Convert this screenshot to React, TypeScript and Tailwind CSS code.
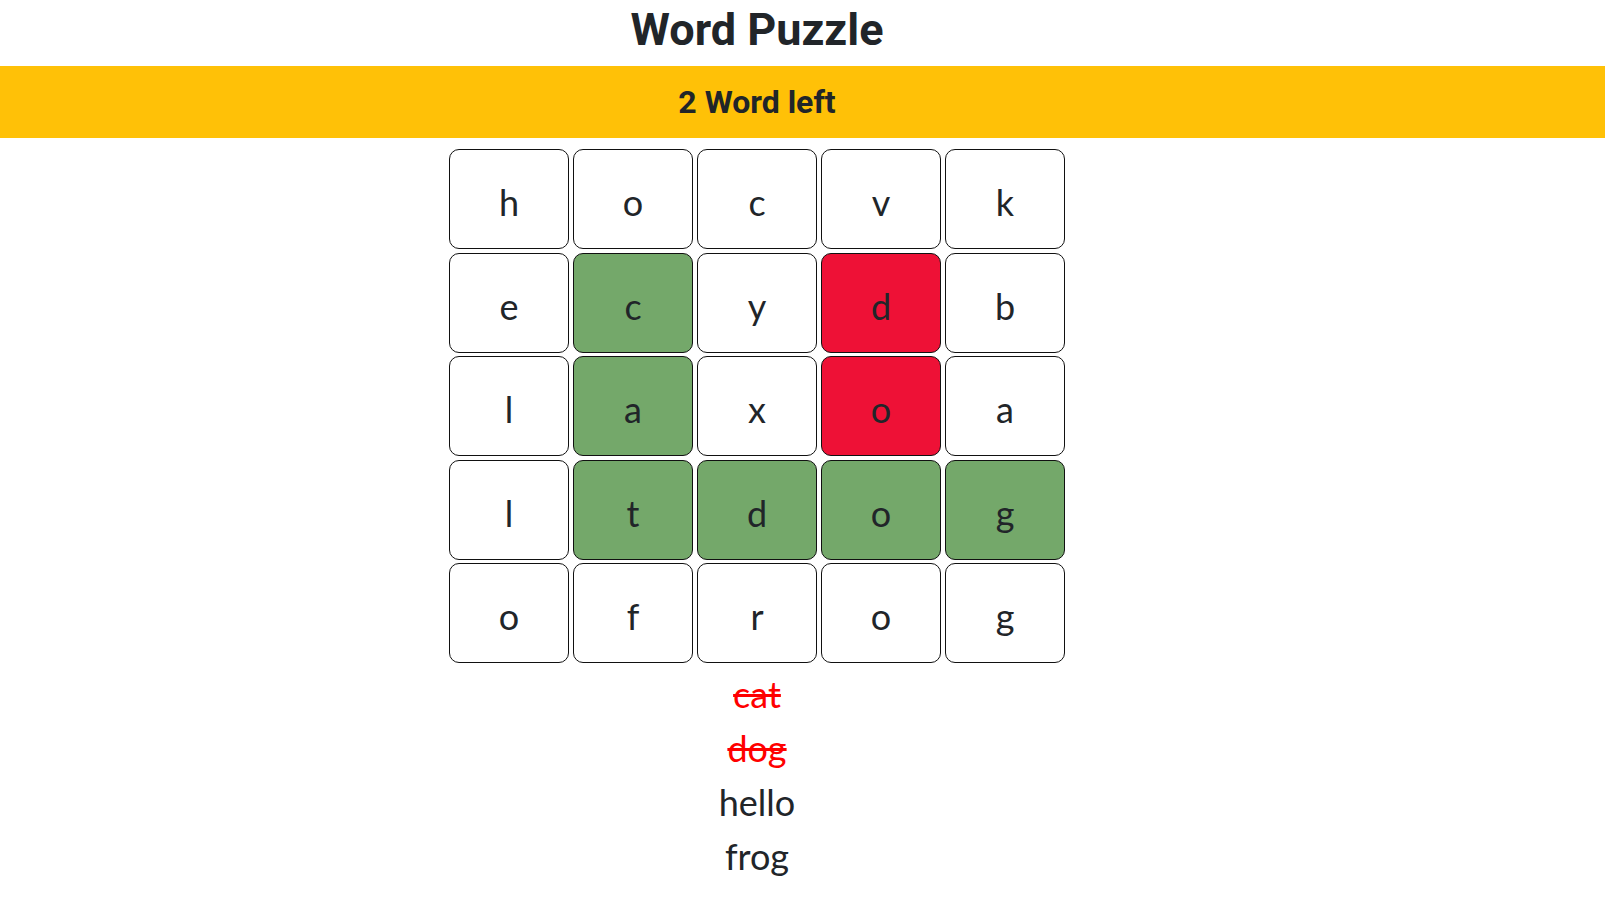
import React from 'react';

type Cell = { ch: string; state?: 'found' | 'wrong' };

const grid: string[][] = [
  ['h', 'o', 'c', 'v', 'k'],
  ['e', 'c', 'y', 'd', 'b'],
  ['l', 'a', 'x', 'o', 'a'],
  ['l', 't', 'd', 'o', 'g'],
  ['o', 'f', 'r', 'o', 'g'],
];

// cells highlighted on the board
const found = ['1-1', '2-1', '3-1', '3-2', '3-3', '3-4'];
const wrong = ['1-3', '2-3'];

const words = [
  { text: 'cat', done: true },
  { text: 'dog', done: true },
  { text: 'hello', done: false },
  { text: 'frog', done: false },
];

function Tile({ ch, state }: Cell) {
  const bg =
    state === 'found' ? 'bg-[#74a86a]' : state === 'wrong' ? 'bg-[#ee1136]' : 'bg-white';
  return (
    <div
      className={`w-[120px] h-[100px] flex items-center justify-center pt-[6px] border border-[#111] rounded-[10px] text-[36px] text-[#212529] ${bg}`}
    >
      {ch}
    </div>
  );
}

export default function App() {
  return (
    <div className="min-h-screen bg-white" style={{ fontFamily: 'Lato, "Noto Sans", sans-serif' }}>
      <h1
        className="h-[66px] pt-[7px] pr-[91px] text-center text-[45px] leading-none font-bold text-[#212529]"
        style={{ fontFamily: 'Roboto, "Liberation Sans", sans-serif' }}
      >
        Word Puzzle
      </h1>

      <div
        className="h-[72px] pt-[20px] pr-[91px] bg-[#ffc107] text-center text-[32px] leading-none font-bold text-[#212529]"
        style={{ fontFamily: 'Roboto, "Liberation Sans", sans-serif' }}
      >
        2 Word left
      </div>

      <div className="flex flex-col items-center pt-[11px] pr-[91px]">
        <div className="grid grid-cols-5 gap-x-1 gap-y-[3.5px]">
          {grid.map((row, r) =>
            row.map((ch, c) => {
              const key = `${r}-${c}`;
              const state = found.includes(key) ? 'found' : wrong.includes(key) ? 'wrong' : undefined;
              return <Tile key={key} ch={ch} state={state} />;
            })
          )}
        </div>

        <ul className="mt-[4px] text-center text-[36px] leading-[54px]">
          {words.map((w) => (
            <li
              key={w.text}
              className={w.done ? 'text-[#ff0000] line-through' : 'text-[#212529]'}
            >
              {w.text}
            </li>
          ))}
        </ul>
      </div>
    </div>
  );
}
